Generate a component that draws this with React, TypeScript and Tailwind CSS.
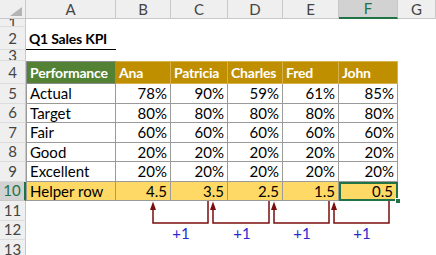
import React from "react";

const colLetters = ["A", "B", "C", "D", "E", "F", "G"];

const people = ["Ana", "Patricia", "Charles", "Fred", "John"];

const dataRows: { label: string; values: string[] }[] = [
  { label: "Actual", values: ["78%", "90%", "59%", "61%", "85%"] },
  { label: "Target", values: ["80%", "80%", "80%", "80%", "80%"] },
  { label: "Fair", values: ["60%", "60%", "60%", "60%", "60%"] },
  { label: "Good", values: ["20%", "20%", "20%", "20%", "20%"] },
  { label: "Excellent", values: ["20%", "20%", "20%", "20%", "20%"] },
];

const helper = ["4.5", "3.5", "2.5", "1.5", "0.5"];

const font = { fontFamily: "Lato, 'Open Sans', sans-serif" };

function RowHead({ n, active }: { n: number; active?: boolean }) {
  return (
    <div
      className={
        active
          ? "flex items-center justify-center bg-[#d2d2d2] border-r-2 border-r-[#217346] border-b border-b-[#c8c8c8] text-[#217346] text-[15px] leading-none overflow-hidden"
          : "flex items-center justify-center bg-[#efefef] border-r border-r-[#c8c8c8] border-b border-b-[#dcdcdc] text-[#444] text-[15px] leading-none overflow-hidden"
      }
    >
      {n}
    </div>
  );
}

function Blank() {
  return <div className="bg-white" />;
}

export default function App() {
  const rows: React.ReactNode[] = [];

  // column header row
  rows.push(
    <div
      key="corner"
      className="relative bg-[#efefef] border-r border-r-[#c8c8c8] border-b border-b-[#c8c8c8]"
    >
      <svg className="absolute left-[9px] top-[7px]" width="14" height="10" viewBox="0 0 14 10">
        <polygon points="13,0 13,9 1,9" fill="#b4b4b4" />
      </svg>
    </div>
  );
  colLetters.forEach((l) => {
    const sel = l === "F";
    rows.push(
      <div
        key={"h" + l}
        className={
          sel
            ? "flex items-center justify-center bg-[#d2d2d2] border-r border-r-[#c8c8c8] border-b-2 border-b-[#217346] text-[#217346] text-[15px] leading-none"
            : "flex items-center justify-center bg-[#efefef] border-r border-r-[#c8c8c8] border-b border-b-[#c8c8c8] text-[#444] text-[15px] leading-none"
        }
      >
        {l}
      </div>
    );
  });

  // row 1
  rows.push(<RowHead key="r1" n={1} />);
  for (let i = 0; i < 7; i++) rows.push(<Blank key={"r1c" + i} />);

  // row 2
  rows.push(<RowHead key="r2" n={2} />);
  rows.push(
    <div
      key="title"
      className="flex items-center pl-[3px] border-b border-b-black font-bold text-[14px] tracking-[-0.2px] text-black whitespace-nowrap"
    >
      Q1 Sales KPI
    </div>
  );
  for (let i = 0; i < 6; i++) rows.push(<Blank key={"r2c" + i} />);

  // row 3
  rows.push(<RowHead key="r3" n={3} />);
  for (let i = 0; i < 7; i++) rows.push(<Blank key={"r3c" + i} />);

  // row 4 : table header
  rows.push(<RowHead key="r4" n={4} />);
  rows.push(
    <div
      key="perf"
      className="flex items-center pl-[3px] bg-[#548235] border border-[#8c8c8c] text-white font-bold text-[14px] tracking-[-0.2px] whitespace-nowrap overflow-hidden"
    >
      Performance
    </div>
  );
  people.forEach((p) =>
    rows.push(
      <div
        key={"p" + p}
        className="flex items-center pl-[3px] bg-[#bf8f00] border-t border-r border-b border-[#d6b24a] text-white font-bold text-[14px] tracking-[-0.2px] whitespace-nowrap overflow-hidden"
      >
        {p}
      </div>
    )
  );
  rows.push(<Blank key="r4g" />);

  // rows 5-9 : data
  dataRows.forEach((r, idx) => {
    rows.push(<RowHead key={"rh" + idx} n={5 + idx} />);
    rows.push(
      <div
        key={"l" + idx}
        className="flex items-center pl-[3px] border-l border-r border-b border-[#9a9a9a] text-black text-[15px] whitespace-nowrap"
      >
        {r.label}
      </div>
    );
    r.values.forEach((v, j) =>
      rows.push(
        <div
          key={"v" + idx + j}
          className="flex items-center justify-end pr-[3px] border-r border-b border-[#9a9a9a] text-black text-[15px]"
        >
          {v}
        </div>
      )
    );
    rows.push(<Blank key={"g" + idx} />);
  });

  // row 10 : helper row
  rows.push(<RowHead key="r10" n={10} active />);
  rows.push(
    <div
      key="helper"
      className="flex items-center pl-[3px] bg-[#ffd966] border-l border-r border-b border-[#9a9a9a] text-black text-[15px] whitespace-nowrap"
    >
      Helper row
    </div>
  );
  helper.forEach((v, j) =>
    rows.push(
      <div
        key={"hv" + j}
        className={
          j === 4
            ? "relative flex items-center justify-end pr-[3px] bg-[#ffd966] border-2 border-[#217346] text-black text-[15px]"
            : "flex items-center justify-end pr-[3px] bg-[#ffd966] border-r border-b border-[#9a9a9a] text-black text-[15px]"
        }
      >
        {v}
        {j === 4 && (
          <div className="absolute right-[-5px] bottom-[-5px] w-[6px] h-[6px] bg-[#217346] border border-white" />
        )}
      </div>
    )
  );
  rows.push(<Blank key="r10g" />);

  // rows 11-13
  [11, 12, 13].forEach((n) => {
    rows.push(<RowHead key={"r" + n} n={n} />);
    for (let i = 0; i < 7; i++) rows.push(<Blank key={"r" + n + "c" + i} />);
  });

  // arrows below the helper row: tail on the right, head on the left
  const brackets = [
    [153, 208],
    [213, 269],
    [274, 329],
    [334, 389],
  ];

  return (
    <div className="relative w-[436px] h-[255px] overflow-hidden bg-white" style={font}>
      <div className="grid grid-cols-[26px_90px_55px_57px_55px_56px_59px_38px] grid-rows-[19px_8px_23px_11px_23px_repeat(9,19.5px)]">
        {rows}
      </div>

      <svg
        className="absolute left-0 top-0 pointer-events-none"
        width="436"
        height="255"
        viewBox="0 0 436 255"
      >
        {brackets.map(([h, t], i) => (
          <g key={i}>
            <polyline
              points={`${t},201 ${t},223 ${h},223 ${h},209`}
              fill="none"
              stroke="#7a0d0d"
              strokeWidth="1.5"
            />
            <polygon points={`${h - 3},210 ${h + 3},210 ${h},201.5`} fill="#7a0d0d" />
          </g>
        ))}
      </svg>

      {[181, 242, 302, 362].map((x) => (
        <div
          key={x}
          className="absolute top-[224px] w-[30px] ml-[-15px] text-center text-[15px] leading-[18px] text-[#2a2ad0]"
          style={{ left: x }}
        >
          +1
        </div>
      ))}
    </div>
  );
}
